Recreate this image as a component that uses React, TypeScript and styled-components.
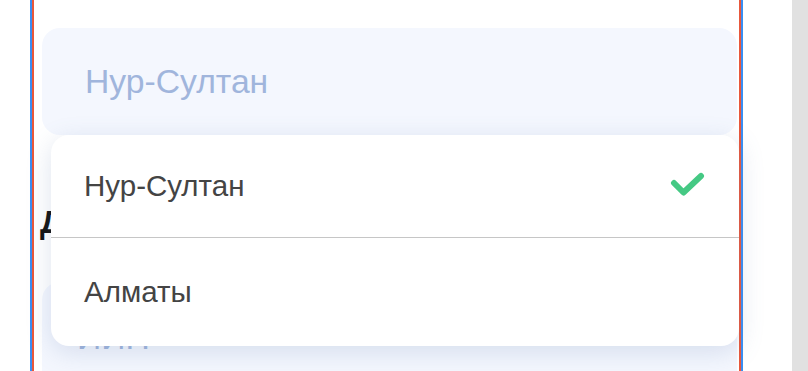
import React from "react";
import styled, { createGlobalStyle } from "styled-components";

const GlobalStyle = createGlobalStyle`
  html, body {
    margin: 0;
    padding: 0;
    background: #ffffff;
    overflow: hidden;
    font-family: "Liberation Sans", Arial, sans-serif;
  }
`;

const Page = styled.div`
  display: flex;
  height: 371px;
  overflow: hidden;
`;

const Frame = styled.div`
  margin-left: 30px;
  width: 713px;
  height: 100%;
  box-sizing: border-box;
  border-left: 2px solid #3b8ef2;
  border-right: 2px solid #3b8ef2;
  box-shadow: inset 2px 0 0 #e8583c, inset -2px 0 0 #e8583c;
  padding: 0 4px 0 10px;
  display: flex;
  flex-direction: column;
  flex-shrink: 0;

  & > * {
    flex-shrink: 0;
  }
`;

const ScrollTrack = styled.div`
  margin-left: auto;
  width: 16px;
  height: 100%;
  background: #e1e1e1;
`;

const SelectWrap = styled.div`
  position: relative;
  margin-top: 28px;
  z-index: 2;
`;

const Field = styled.div<{ $tall?: boolean }>`
  height: ${(p) => (p.$tall ? 120 : 107)}px;
  border-radius: 18px;
  background: #f4f7fe;
  display: flex;
  align-items: ${(p) => (p.$tall ? "flex-start" : "center")};
  padding-left: ${(p) => (p.$tall ? 35 : 43)}px;
  padding-top: ${(p) => (p.$tall ? 36 : 0)}px;
  box-sizing: border-box;
`;

const Placeholder = styled.span`
  font-size: 33.7px;
  color: #a0b5dc;
`;

const Menu = styled.ul`
  position: absolute;
  top: 100%;
  left: 9px;
  width: 688px;
  margin: 0;
  padding: 0;
  list-style: none;
  background: #ffffff;
  border-radius: 18px;
  box-shadow: 0 6px 26px rgba(90, 120, 170, 0.2);
  overflow: hidden;
`;

const Option = styled.li<{ $h: number }>`
  height: ${(p) => p.$h}px;
  display: flex;
  align-items: center;
  justify-content: space-between;
  padding: 0 33px 0 33px;
  font-size: 29.5px;
  color: #444444;
  & + & {
    border-top: 1px solid #c6c6c6;
  }
`;

const Label = styled.div`
  margin-top: 67px;
  font-size: 32px;
  line-height: 40px;
  font-weight: 700;
  color: #111111;
  margin-left: -2px;
`;

const SecondField = styled(Field)`
  margin-top: 40px;
`;

const Check = () => (
  <svg width="36" height="28" viewBox="0 0 36 28">
    <path
      d="M4 11 L13.5 20.5 L31 4"
      fill="none"
      stroke="#45c984"
      strokeWidth="6"
      strokeLinecap="round"
      strokeLinejoin="round"
    />
  </svg>
);

export default function App() {
  return (
    <>
      <GlobalStyle />
      <Page>
        <Frame>
          <SelectWrap>
            <Field>
              <Placeholder>Нур-Султан</Placeholder>
            </Field>
            <Menu>
              <Option $h={102}>
                Нур-Султан
                <Check />
              </Option>
              <Option $h={108}>Алматы</Option>
            </Menu>
          </SelectWrap>
          <Label>Дата рождения</Label>
          <SecondField $tall>
            <Placeholder>ИИН</Placeholder>
          </SecondField>
        </Frame>
        <ScrollTrack />
      </Page>
    </>
  );
}
